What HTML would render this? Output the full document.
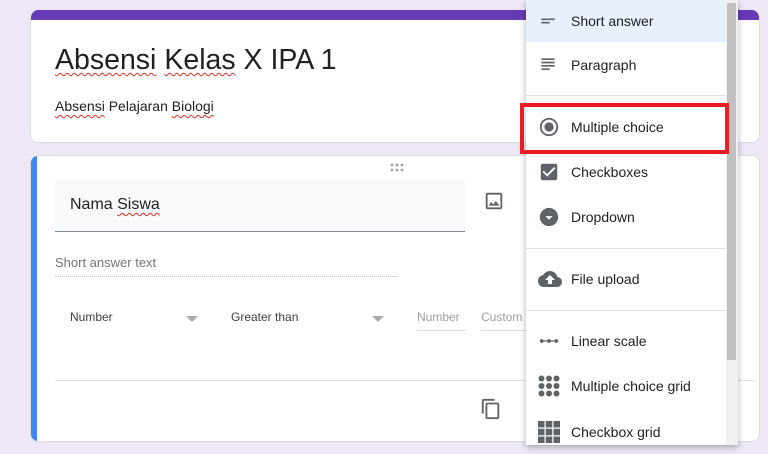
<!DOCTYPE html>
<html><head><style>
body{margin:0;width:768px;height:445px;overflow:hidden;background:#ede7f6;font-family:"Liberation Sans",sans-serif;position:relative}
.abs{position:absolute}
.card{background:#fff;border-radius:8px;border:1px solid #dadce0;box-sizing:border-box}
.t{color:#202124;font-size:14px;white-space:nowrap}
.sq{text-decoration:underline wavy #d93025;text-decoration-thickness:1px;text-underline-offset:3px}
.mi{position:absolute;left:0;width:200px;height:44px}
.mi span{position:absolute;left:45px;top:50%;transform:translateY(-50%);font-size:14px;color:#202124}
.mi svg{position:absolute;left:12px;top:50%;transform:translateY(-50%)}
</style></head><body>
<div class="abs card" style="left:30px;top:10px;width:730px;height:133px;overflow:hidden;border-top:none">
 <div class="abs" style="left:0;top:0;width:100%;height:10px;background:#673ab7"></div>
 <div class="abs" style="left:24px;top:34px;font-size:28.5px;color:#202124"><span class="sq">Absensi</span> <span class="sq">Kelas</span> X IPA 1</div>
 <div class="abs t" style="left:24px;top:88px"><span class="sq">Absensi</span> Pelajaran <span class="sq">Biologi</span></div>
</div>
<div class="abs card" style="left:30px;top:155px;width:730px;height:287px;overflow:hidden">
 <div class="abs" style="left:0;top:0;width:6px;height:100%;background:#4285f4"></div>
 <svg class="abs" style="left:359px;top:7px" width="14" height="9" viewBox="0 0 14 9"><g fill="#9aa0a6"><circle cx="2" cy="2" r="1.4"/><circle cx="7" cy="2" r="1.4"/><circle cx="12" cy="2" r="1.4"/><circle cx="2" cy="7" r="1.4"/><circle cx="7" cy="7" r="1.4"/><circle cx="12" cy="7" r="1.4"/></g></svg>
 <div class="abs" style="left:24px;top:23px;width:410px;height:52px;background:#f8f9fa;border-bottom:1px solid #80868b"></div>
 <div class="abs" style="left:39px;top:40px;font-size:16px;color:#202124">Nama <span class="sq">Siswa</span></div>
 <svg class="abs" style="left:452px;top:34px" width="22" height="22" viewBox="0 0 24 24"><path fill="#5f6368" d="M19 3H5c-1.1 0-2 .9-2 2v14c0 1.1.9 2 2 2h14c1.1 0 2-.9 2-2V5c0-1.1-.9-2-2-2zm0 16H5V5h14v14zm-5-7l-3 3.72L9 13l-3 4h12l-4-5z"/></svg>
 <div class="abs" style="left:24px;top:99px;font-size:13px;color:#70757a">Short answer text</div>
 <div class="abs" style="left:24px;top:120px;width:342px;border-top:1px dotted #bdc1c6"></div>
 <div class="abs" style="left:39px;top:154px;font-size:12px;color:#3c4043">Number</div>
 <div class="abs" style="left:155px;top:160px;border:6px solid transparent;border-top:6px solid #a8abaf;border-bottom:0"></div>
 <div class="abs" style="left:200px;top:154px;font-size:12px;color:#3c4043">Greater than</div>
 <div class="abs" style="left:341px;top:160px;border:6px solid transparent;border-top:6px solid #a8abaf;border-bottom:0"></div>
 <div class="abs" style="left:386px;top:154px;font-size:12px;color:#9aa0a6;width:49px;height:20px;border-bottom:1px solid #dadce0">Number</div>
 <div class="abs" style="left:450px;top:154px;font-size:12px;color:#9aa0a6;width:60px;height:20px;border-bottom:1px solid #dadce0">Custom</div>
 <div class="abs" style="left:24px;top:224px;width:700px;border-top:1px solid #e0e0e0"></div>
 <svg class="abs" style="left:449px;top:242px" width="22" height="22" viewBox="0 0 24 24"><path fill="#5f6368" d="M16 1H4c-1.1 0-2 .9-2 2v14h2V3h12V1zm3 4H8c-1.1 0-2 .9-2 2v14c0 1.1.9 2 2 2h11c1.1 0 2-.9 2-2V7c0-1.1-.9-2-2-2zm0 16H8V7h11v14z"/></svg>
</div>
<div class="abs" style="left:526px;top:0;width:212px;height:445px;background:#fff;box-shadow:0 2px 6px rgba(0,0,0,.3)">
 <div class="abs" style="left:200px;top:0;width:12px;height:445px;background:#f1f1f1"></div>
 <div class="abs" style="left:201px;top:3px;width:9px;height:357px;background:#c1c1c1"></div>
 <div class="mi" style="top:0;height:42px;background:#e8f0fe"><svg width="20" height="20" viewBox="0 0 24 24"><path fill="#5f6368" d="M4 9h16v2H4zm0 4h10v2H4z"/></svg><span>Short answer</span></div>
 <div class="mi" style="top:43px"><svg width="20" height="20" viewBox="0 0 24 24"><path fill="#5f6368" d="M4 4h16v2H4zm0 4h16v2H4zm0 4h16v2H4zm0 4h10v2H4z"/></svg><span>Paragraph</span></div>
 <div class="abs" style="left:0;top:95px;width:200px;border-top:1px solid #e0e0e0"></div>
 <div class="mi" style="top:105px"><svg width="22" height="22" viewBox="0 0 24 24"><path fill="#5f6368" d="M12 7c-2.76 0-5 2.24-5 5s2.24 5 5 5 5-2.24 5-5-2.24-5-5-5zm0-5C6.48 2 2 6.480 2 12s4.48 10 10 10 10-4.48 10-10S17.52 2 12 2zm0 18c-4.42 0-8-3.58-8-8s3.58-8 8-8 8 3.58 8 8-3.58 8-8 8z"/></svg><span>Multiple choice</span></div>
 <div class="mi" style="top:150px"><svg width="22" height="22" viewBox="0 0 24 24"><path fill="#5f6368" d="M19 3H5c-1.11 0-2 .9-2 2v14c0 1.1.89 2 2 2h14c1.11 0 2-.9 2-2V5c0-1.1-.89-2-2-2zm-9 14l-5-5 1.41-1.41L10 14.17l7.59-7.59L19 8l-9 9z"/></svg><span>Checkboxes</span></div>
 <div class="mi" style="top:195px"><svg width="22" height="22" viewBox="0 0 24 24"><path fill="#5f6368" d="M12 2C6.48 2 2 6.48 2 12s4.48 10 10 10 10-4.480 10-10S17.52 2 12 2zm0 13l-4-4h8z"/></svg><span>Dropdown</span></div>
 <div class="abs" style="left:0;top:248px;width:200px;border-top:1px solid #e0e0e0"></div>
 <div class="mi" style="top:257px"><svg width="24" height="24" viewBox="0 0 24 24"><path fill="#5f6368" d="M19.35 10.04C18.67 6.59 15.64 4 12 4 9.11 4 6.6 5.64 5.35 8.04 2.34 8.36 0 10.91 0 14c0 3.31 2.69 6 6 6h13c2.76 0 5-2.24 5-5 0-2.64-2.05-4.78-4.65-4.96zM14 13v4h-4v-4H7l5-5 5 5h-3z"/></svg><span>File upload</span></div>
 <div class="abs" style="left:0;top:310px;width:200px;border-top:1px solid #e0e0e0"></div>
 <div class="mi" style="top:319px"><svg width="22" height="22" viewBox="0 0 24 24"><g fill="#5f6368"><circle cx="4" cy="12" r="2"/><circle cx="12" cy="12" r="2"/><circle cx="20" cy="12" r="2"/><rect x="4" y="11.3" width="16" height="1.4"/></g></svg><span>Linear scale</span></div>
 <div class="mi" style="top:364px"><svg width="22" height="22" viewBox="0 0 22 22"><g fill="#5f6368"><circle cx="3.5" cy="3.5" r="3"/><circle cx="11" cy="3.5" r="3"/><circle cx="18.5" cy="3.5" r="3"/><circle cx="3.5" cy="11" r="3"/><circle cx="11" cy="11" r="3"/><circle cx="18.5" cy="11" r="3"/><circle cx="3.5" cy="18.5" r="3"/><circle cx="11" cy="18.5" r="3"/><circle cx="18.5" cy="18.5" r="3"/></g></svg><span>Multiple choice grid</span></div>
 <div class="mi" style="top:410px"><svg width="22" height="22" viewBox="0 0 22 22"><g fill="#5f6368"><rect x="0" y="0" width="6.5" height="6.5"/><rect x="7.75" y="0" width="6.5" height="6.5"/><rect x="15.5" y="0" width="6.5" height="6.5"/><rect x="0" y="7.75" width="6.5" height="6.5"/><rect x="7.75" y="7.75" width="6.5" height="6.5"/><rect x="15.5" y="7.75" width="6.5" height="6.5"/><rect x="0" y="15.5" width="6.5" height="6.5"/><rect x="7.75" y="15.5" width="6.5" height="6.5"/><rect x="15.5" y="15.5" width="6.5" height="6.5"/></g></svg><span>Checkbox grid</span></div>
</div>
<div class="abs" style="left:520px;top:103px;width:209px;height:51px;border:4px solid #ed1c24;box-sizing:border-box"></div>
</body></html>
